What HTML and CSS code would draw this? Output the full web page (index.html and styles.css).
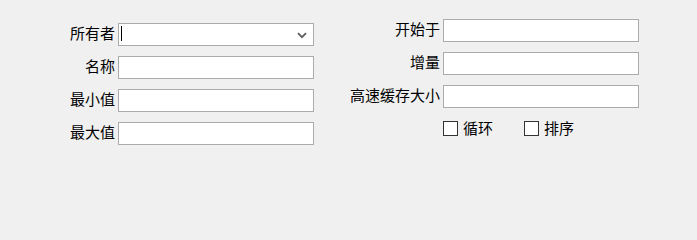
FILE: index.html
```html
<!DOCTYPE html>
<html lang="zh">
<head>
<meta charset="utf-8">
<link rel="stylesheet" href="styles.css">
</head>
<body>
<div class="page">
  <div class="form left">
    <label class="lbl">所有者</label>
    <div class="field select"><span class="caret"></span>
      <svg class="chev" width="10" height="7" viewBox="0 0 10 7"><path d="M1 1.2 L5 5.2 L9 1.2" fill="none" stroke="#5f5f5f" stroke-width="1.8"/></svg>
    </div>
    <label class="lbl">名称</label>
    <div class="field"></div>
    <label class="lbl">最小值</label>
    <div class="field"></div>
    <label class="lbl">最大值</label>
    <div class="field"></div>
  </div>
  <div class="form right">
    <label class="lbl">开始于</label>
    <div class="field"></div>
    <label class="lbl">增量</label>
    <div class="field"></div>
    <label class="lbl">高速缓存大小</label>
    <div class="field"></div>
    <span></span>
    <div class="checks">
      <label class="chk"><span class="box"></span>循环</label>
      <label class="chk"><span class="box"></span>排序</label>
    </div>
  </div>
</div>
</body>
</html>
```
FILE: styles.css
```css
html, body {
  margin: 0;
  padding: 0;
  background: #f0f0f0;
}
body {
  width: 697px;
  height: 206px;
  overflow: hidden;
  font-family: "Noto Sans CJK SC", "Noto Sans", sans-serif;
  font-size: 15px;
  color: #000;
}
.page {
  display: flex;
  align-items: flex-start;
}
.form {
  display: grid;
  grid-template-columns: auto 196px;
  column-gap: 3px;
  row-gap: 10px;
  grid-auto-rows: 23px;
}
.left {
  margin-top: 23px;
  width: 314px;
  justify-content: end;
}
.right {
  margin-top: 19px;
  width: 325px;
  justify-content: end;
}
.lbl {
  text-align: right;
  line-height: 20px;
  white-space: nowrap;
}
.field {
  box-sizing: border-box;
  height: 23px;
  background: #fff;
  border: 1px solid #ababab;
  position: relative;
}
.select .caret {
  position: absolute;
  left: 2px;
  top: 2px;
  width: 1px;
  height: 15px;
  background: #000;
}
.select .chev {
  position: absolute;
  right: 6px;
  top: 8px;
}
.checks {
  display: flex;
  gap: 31px;
  height: 20px;
  align-items: center;
}
.chk {
  display: flex;
  align-items: center;
  gap: 5px;
  line-height: 18px;
}
.box {
  box-sizing: border-box;
  width: 15px;
  height: 15px;
  border: 1px solid #333;
  background: #fff;
}
```
